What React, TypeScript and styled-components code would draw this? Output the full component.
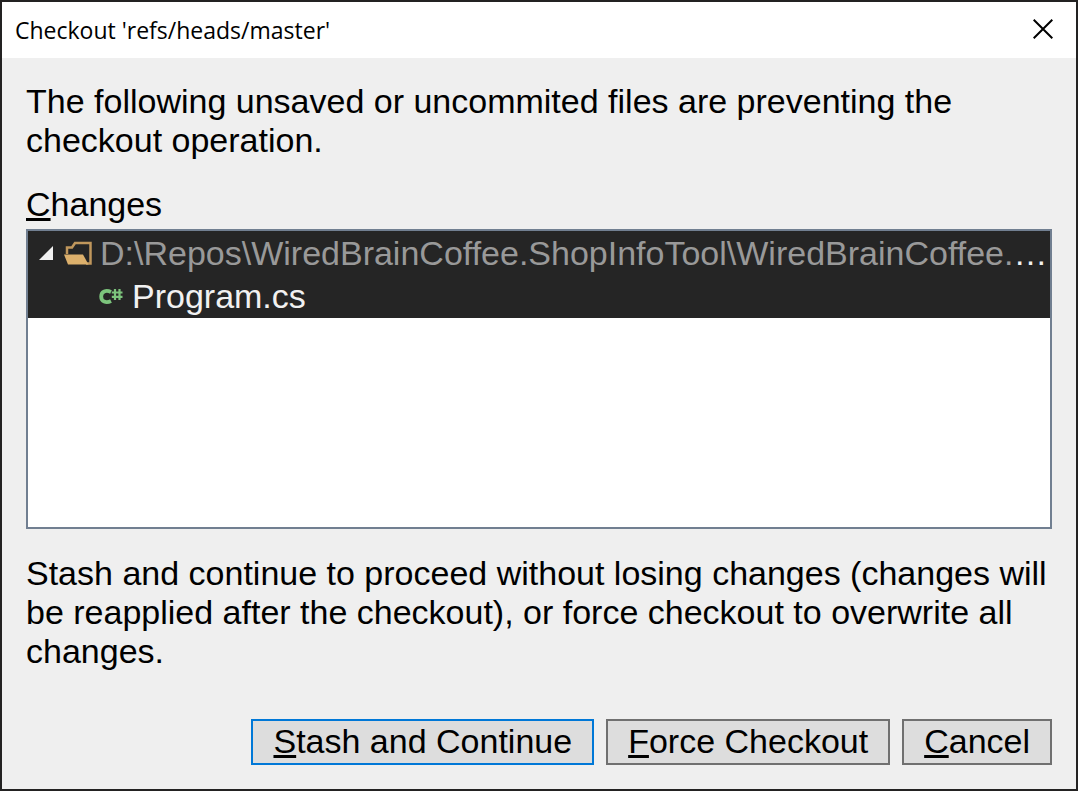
import React from "react";
import styled, { createGlobalStyle } from "styled-components";

const GlobalStyle = createGlobalStyle`
  *, *::before, *::after { box-sizing: border-box; }
  body { margin: 0; background: #efefef; }
`;

const Dialog = styled.main`
  display: flex;
  flex-direction: column;
  min-height: 100vh;
  border: 2px solid #232222;
  background: #efefef;
  color: #000;
  font-family: "Liberation Sans", Arial, sans-serif;
  font-size: 34px;
  line-height: 39px;
`;

const TitleBar = styled.header`
  display: flex;
  align-items: center;
  justify-content: space-between;
  height: 56px;
  padding: 0 23px 0 13px;
  background: #fff;
`;

const Title = styled.h1`
  margin: 0;
  font-family: "Segoe UI", "Open Sans", "Noto Sans", sans-serif;
  font-size: 23px;
  font-weight: 400;
  line-height: 32px;
`;

const CloseButton = styled.button`
  display: flex;
  padding: 0 0 2px;
  border: 0;
  background: none;
`;

const Content = styled.div`
  display: flex;
  flex: 1;
  flex-direction: column;
  padding: 24px;
`;

const Message = styled.p`
  margin: 0;
`;

const ListLabel = styled.h2`
  margin: 25px 0 5px;
  font-size: inherit;
  font-weight: 400;
`;

const Mnemonic = styled.span`
  text-decoration: underline;
  text-decoration-thickness: 3px;
  text-underline-offset: 2px;
  text-decoration-skip-ink: none;
`;

const FileTree = styled.ul`
  flex: 1;
  min-height: 300px;
  margin: 0 0 25px;
  padding: 0;
  border: 2px solid #717f91;
  background: #fff;
  list-style: none;
`;

const TreeRow = styled.li<{ $level: number }>`
  display: flex;
  align-items: center;
  height: ${(p) => (p.$level ? 43 : 44)}px;
  padding-left: ${(p) => (p.$level ? 71 : 11)}px;
  background: #252525;
  color: #f1f1f1;

  svg { flex: none; }
`;

const FolderPath = styled.span`
  flex: 1;
  min-width: 0;
  margin-left: 6px;
  overflow: hidden;
  text-overflow: ellipsis;
  white-space: nowrap;
`;

const Dimmed = styled.span`
  color: #999;
`;

const FileName = styled.span`
  margin-left: 9px;
`;

const Actions = styled.footer`
  display: flex;
  justify-content: flex-end;
  gap: 12px;
  margin-top: 48px;
`;

const ActionButton = styled.button<{ $primary?: boolean }>`
  height: 46px;
  padding: 0 20px 2px;
  border: 2px solid ${(p) => (p.$primary ? "#0078d7" : "#707070")};
  background: #ddd;
  color: #000;
  font: inherit;
  white-space: nowrap;
`;

const FolderDrawing = styled.svg`
  margin-left: 10px;
`;

const CloseIcon = () => (
  <svg width="20" height="20" viewBox="0 0 20 20" aria-hidden="true">
    <path d="M.7.7 19.3 19.3M19.3.7.7 19.3" stroke="#000" strokeWidth="2" />
  </svg>
);

const ExpandedIcon = () => (
  <svg width="14" height="14" viewBox="0 0 14 14" aria-hidden="true">
    <path d="M14 0v14H0z" fill="#f1f1f1" />
  </svg>
);

const FolderIcon = () => (
  <FolderDrawing width="31" height="26" viewBox="0 0 31 26" aria-hidden="true">
    <path d="M4 14V7.500H9L12 3h15.500v20.500H23" fill="none" stroke="#c0975c" strokeWidth="2.500" />
    <path d="M1 14.500h19L25.500 24.500H5z" fill="#dcb06c" />
  </FolderDrawing>
);

const CSharpIcon = () => (
  <svg width="24" height="18" viewBox="0 0 24 18" aria-hidden="true">
    <path d="M12 4C7 1.500 2.200 3.400 2.200 8.500S7 15.500 12 13" fill="none" stroke="#7cc47c" strokeWidth="3.800" />
    <path d="M16 1v11M20.500 1v11M12.800 4.500H23.500M12.800 8.800H23.500" stroke="#7cc47c" strokeWidth="2.200" />
  </svg>
);

export default function App() {
  return (
    <>
      <GlobalStyle />
      <Dialog>
        <TitleBar>
          <Title>Checkout 'refs/heads/master'</Title>
          <CloseButton type="button" aria-label="Close"><CloseIcon /></CloseButton>
        </TitleBar>
        <Content>
          <Message>
            The following unsaved or uncommited files are preventing the checkout operation.
          </Message>
          <ListLabel id="changes"><Mnemonic>C</Mnemonic>hanges</ListLabel>
          <FileTree aria-labelledby="changes">
            <TreeRow $level={0}>
              <ExpandedIcon />
              <FolderIcon />
              <FolderPath>
                <Dimmed>D:\Repos\WiredBrainCoffee.ShopInfoTool\WiredBrainCoffee.</Dimmed>…
              </FolderPath>
            </TreeRow>
            <TreeRow $level={1}>
              <CSharpIcon />
              <FileName>Program.cs</FileName>
            </TreeRow>
          </FileTree>
          <Message>
            Stash and continue to proceed without losing changes (changes will be reapplied after
            the checkout), or force checkout to overwrite all changes.
          </Message>
          <Actions>
            <ActionButton type="button" $primary><Mnemonic>S</Mnemonic>tash and Continue</ActionButton>
            <ActionButton type="button"><Mnemonic>F</Mnemonic>orce Checkout</ActionButton>
            <ActionButton type="button"><Mnemonic>C</Mnemonic>ancel</ActionButton>
          </Actions>
        </Content>
      </Dialog>
    </>
  );
}
